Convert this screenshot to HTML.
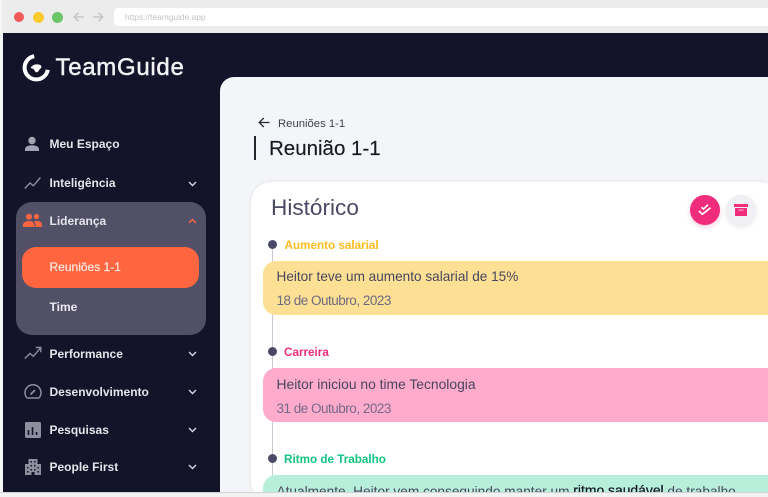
<!DOCTYPE html>
<html lang="pt">
<head>
<meta charset="utf-8">
<title>TeamGuide</title>
<style>
html,body{margin:0;padding:0;width:768px;height:497px;overflow:hidden;background:#fff;font-family:"Liberation Sans",sans-serif}
.a{position:absolute;white-space:nowrap}
#stage{position:relative;width:768px;height:497px;overflow:hidden;background:#f6f6f7}
.nav{left:49.5px;color:#e4e4ea;font-size:12px;font-weight:700;line-height:16px}
.tl{color:#46465f;font-size:13.6px;line-height:18px}
.dt{color:#6b6b80;font-size:13.5px;letter-spacing:-.5px;line-height:18px}
.lb{font-size:11.7px;font-weight:700;line-height:16px}
.dot{position:absolute;left:268px;width:9px;height:9px;border-radius:50%;background:#4a4a68}
svg{position:absolute;overflow:visible}
</style>
</head>
<body>
<div id="stage">
  <!-- browser chrome -->
  <div class="a" style="left:2px;top:0;width:766px;height:33px;background:#ececec"></div>
  <div class="a" style="left:14px;top:12px;width:10px;height:10px;border-radius:50%;background:#f25a5a"></div>
  <div class="a" style="left:33px;top:11.5px;width:11px;height:11px;border-radius:50%;background:#fdca2e"></div>
  <div class="a" style="left:52px;top:11.5px;width:11px;height:11px;border-radius:50%;background:#6cc566"></div>
  <svg style="left:73px;top:11px" width="12" height="12" viewBox="0 0 12 12" fill="none" stroke="#c6c6c6" stroke-width="1.6"><path d="M11 6H1.5M5.5 1.8L1.3 6l4.2 4.2"/></svg>
  <svg style="left:92px;top:11px" width="12" height="12" viewBox="0 0 12 12" fill="none" stroke="#c6c6c6" stroke-width="1.6"><path d="M1 6h9.5M6.5 1.8L10.7 6l-4.2 4.2"/></svg>
  <div class="a" style="left:114px;top:8px;width:654px;height:18px;background:#fff;border-radius:4px 0 0 4px"></div>
  <div class="a" style="left:125px;top:11px;font-size:8.4px;line-height:12px;color:#c3c3c3">https://teamguide.app</div>

  <!-- app background -->
  <div class="a" style="left:2.5px;top:33px;width:766px;height:459px;background:#131429"></div>
  <div class="a" style="left:220px;top:77px;width:548px;height:415px;background:#f4f5f8;border-radius:14px 0 0 0"></div>

  <!-- logo -->
  <svg style="left:21px;top:53px" width="30" height="30" viewBox="0 0 30 30">
    <path d="M13.2 3.2A11.7 11.7 0 1 0 26.8 16.8" fill="none" stroke="#fff" stroke-width="4"/>
    <path d="M9.6 14.6c1.6-2 3.4-3 5.4-3.2 2.6-.2 5 .4 5.4 2 .3 1.5-1.4 2.4-2.4 3.8-.7 1-1.2 2.2-2.6 2-1.5-.2-1.6-2-2.8-3-1-.8-2.4-.8-3-1.6z" fill="#fff"/>
  </svg>
  <div class="a" style="left:55.5px;top:54px;font-size:24px;line-height:28px;color:#f2f2f4;letter-spacing:.7px;-webkit-text-stroke:.45px #f2f2f4">TeamGuide</div>

  <!-- sidebar group -->
  <div class="a" style="left:15.5px;top:202px;width:190.5px;height:133px;background:#515066;border-radius:16px"></div>
  <div class="a" style="left:22px;top:247px;width:177px;height:41px;background:#ff6640;border-radius:14px"></div>

  <!-- nav icons -->
  <svg style="left:24px;top:136px" width="16" height="16" viewBox="0 0 16 16" fill="#a3a3b3"><circle cx="8" cy="4.5" r="3.7"/><path d="M1 15v-2c0-2.5 4-3.7 7-3.7s7 1.2 7 3.7v2z"/></svg>
  <svg style="left:24px;top:176px" width="17" height="14" viewBox="0 0 17 14" fill="none" stroke="#8d8d9e" stroke-width="1.4"><path d="M.8 12.5L6 7l3.3 2.8L16.4 1.5"/></svg>
  <svg style="left:23px;top:213px" width="19" height="15" viewBox="0 0 19 15" fill="#ff6640"><circle cx="6" cy="3.8" r="3"/><circle cx="13.5" cy="3.5" r="2.6"/><path d="M0 14v-2c0-2.5 3-4 6-4s5.5 1.5 5.5 4v2z"/><path d="M12.5 14v-2.5c0-1.3-.6-2.3-1.500-3.200 .8-.3 1.700-.4 2.500-.4 2.700 0 5.500 1.300 5.500 3.500V14z"/></svg>
  <svg style="left:24px;top:346px" width="18" height="14" viewBox="0 0 18 14" fill="none" stroke="#8d8d9e" stroke-width="1.4"><path d="M.8 12.5L6 7.5l3.3 2.8L16.5 2M11.8 1.500h5v4.700"/></svg>
  <svg style="left:24px;top:384px" width="18" height="15" viewBox="0 0 18 15" fill="none" stroke="#8d8d9e" stroke-width="1.5"><path d="M3 14h12M3 14A8 8 0 1 1 15 14"/><path d="M6.5 10.500L11 6" stroke-width="1.8"/></svg>
  <svg style="left:25px;top:422px" width="16" height="16" viewBox="0 0 16 16"><rect width="16" height="16" rx="1.5" fill="#8e8e9f"/><path d="M3.500 8v5M7.500 5v8M11.500 10v3" stroke="#131429" stroke-width="1.6"/></svg>
  <svg style="left:25px;top:459px" width="16" height="16" viewBox="0 0 16 16" fill="#8e8e9f"><path d="M3.500 0h9v5H16v11H0V5h3.500z"/><path d="M5.500 2h1.500v1.500H5.500zM9 2h1.500v1.500H9zM5.500 6h1.500v1.500H5.500zM9 6h1.500v1.500H9zM2 8h1.500v1.500H2zM12.500 8h1.500v1.500h-1.500zM5.500 10h1.500v1.500H5.500zM9 10h1.500v1.500H9zM2 12h1.500v1.500H2zM12.500 12h1.500v1.500h-1.500zM6.500 13h3v3h-3z" fill="#131429"/></svg>

  <!-- nav labels -->
  <div class="a nav" style="top:136px">Meu Espaço</div>
  <div class="a nav" style="top:175px">Inteligência</div>
  <div class="a nav" style="top:213px">Liderança</div>
  <div class="a nav" style="top:259px;font-weight:400;color:#ffe9e2;-webkit-text-stroke:.2px #ffe9e2">Reuniões 1-1</div>
  <div class="a nav" style="top:299px;color:#eceaf3">Time</div>
  <div class="a nav" style="top:346px">Performance</div>
  <div class="a nav" style="top:384px">Desenvolvimento</div>
  <div class="a nav" style="top:422px">Pesquisas</div>
  <div class="a nav" style="top:459px">People First</div>

  <!-- chevrons -->
  <svg style="left:188px;top:181px" width="9" height="6" viewBox="0 0 9 6" fill="none" stroke="#d8d8e0" stroke-width="1.4"><path d="M1 1l3.500 3.500L8 1"/></svg>
  <svg style="left:188px;top:218px" width="9" height="6" viewBox="0 0 9 6" fill="none" stroke="#ff6640" stroke-width="1.4"><path d="M1 5L4.500 1.500 8 5"/></svg>
  <svg style="left:188px;top:351px" width="9" height="6" viewBox="0 0 9 6" fill="none" stroke="#d8d8e0" stroke-width="1.4"><path d="M1 1l3.500 3.500L8 1"/></svg>
  <svg style="left:188px;top:389px" width="9" height="6" viewBox="0 0 9 6" fill="none" stroke="#d8d8e0" stroke-width="1.4"><path d="M1 1l3.500 3.500L8 1"/></svg>
  <svg style="left:188px;top:427px" width="9" height="6" viewBox="0 0 9 6" fill="none" stroke="#d8d8e0" stroke-width="1.4"><path d="M1 1l3.500 3.500L8 1"/></svg>
  <svg style="left:188px;top:464px" width="9" height="6" viewBox="0 0 9 6" fill="none" stroke="#d8d8e0" stroke-width="1.4"><path d="M1 1l3.500 3.500L8 1"/></svg>

  <!-- header -->
  <svg style="left:258px;top:117px" width="12" height="11" viewBox="0 0 12 11" fill="none" stroke="#2a2a36" stroke-width="1.3"><path d="M11.500 5.500H1.200M5.800 1L1.200 5.500 5.800 10"/></svg>
  <div class="a" style="left:278px;top:116.5px;font-size:11.3px;line-height:14px;color:#3f3f4e">Reuniões 1-1</div>
  <div class="a" style="left:254px;top:136px;width:2px;height:24px;background:#26262e"></div>
  <div class="a" style="left:269px;top:135.5px;font-size:20.5px;line-height:26px;color:#191923;-webkit-text-stroke:.15px #191923">Reunião 1-1</div>

  <!-- card -->
  <div class="a" style="left:251px;top:182px;width:530px;height:320px;background:#fff;border-radius:20px;box-shadow:0 0 3px rgba(40,40,70,.1)"></div>
  <div class="a" style="left:271px;top:194px;font-size:22.6px;line-height:28px;color:#4a4a64">Histórico</div>

  <div class="a" style="left:690px;top:195px;width:30px;height:30px;border-radius:50%;background:#ef2d7c;box-shadow:0 2px 5px rgba(239,45,124,.25)"></div>
  <svg style="left:698px;top:203px" width="14" height="14" viewBox="0 0 14 14" fill="none" stroke="#fff" stroke-width="1.7"><path d="M3.500 4.200l2 1.800L10 1.800M1 8l3.300 3.300L12.500 4.800"/></svg>
  <div class="a" style="left:726px;top:195px;width:30px;height:30px;border-radius:50%;background:#f0f0f4;box-shadow:0 2px 5px rgba(60,60,90,.12)"></div>
  <svg style="left:734px;top:204px" width="14" height="12" viewBox="0 0 14 12" fill="#ef2d7c"><rect width="14" height="3"/><path d="M1 4h12v8H1z"/><rect x="4.500" y="5.500" width="5" height="1.2" fill="#f7a8c8"/></svg>

  <!-- timeline -->
  <div class="a" style="left:272px;top:245px;width:1px;height:247px;background:#c9c9d4"></div>
  <div class="dot" style="top:240px"></div>
  <div class="a lb" style="left:284.5px;top:238px;color:#fdbc1c">Aumento salarial</div>
  <div class="a" style="left:263px;top:261px;width:520px;height:54px;background:#fee094;border-radius:13px"></div>
  <div class="a tl" style="left:276.5px;top:268px">Heitor teve um aumento salarial de 15%</div>
  <div class="a dt" style="left:276.5px;top:292px">18 de Outubro, 2023</div>

  <div class="dot" style="top:347px"></div>
  <div class="a lb" style="left:284px;top:345px;color:#ef2d7c">Carreira</div>
  <div class="a" style="left:263px;top:368px;width:520px;height:54px;background:#ffabcb;border-radius:13px"></div>
  <div class="a tl" style="left:276.5px;top:375px;font-size:13.85px">Heitor iniciou no time Tecnologia</div>
  <div class="a dt" style="left:276.5px;top:400px;color:#75698a">31 de Outubro, 2023</div>

  <div class="dot" style="top:454px"></div>
  <div class="a lb" style="left:284px;top:451.5px;color:#11c483">Ritmo de Trabalho</div>
  <div class="a" style="left:263px;top:475px;width:520px;height:40px;background:#b8efdb;border-radius:13px"></div>
  <div class="a tl" style="left:276.5px;top:482px;font-size:13.67px">Atualmente, Heitor vem conseguindo manter um <span style="color:#111122;font-size:13.9px;position:relative;top:-1px;-webkit-text-stroke:.2px #111122">ritmo saudável</span> de trabalho.</div>

  <div class="a" style="left:0;top:492px;width:768px;height:5px;background:#f2f2f3;border-top:1px solid #d4d4d6;box-sizing:border-box"></div>
</div>
</body>
</html>
